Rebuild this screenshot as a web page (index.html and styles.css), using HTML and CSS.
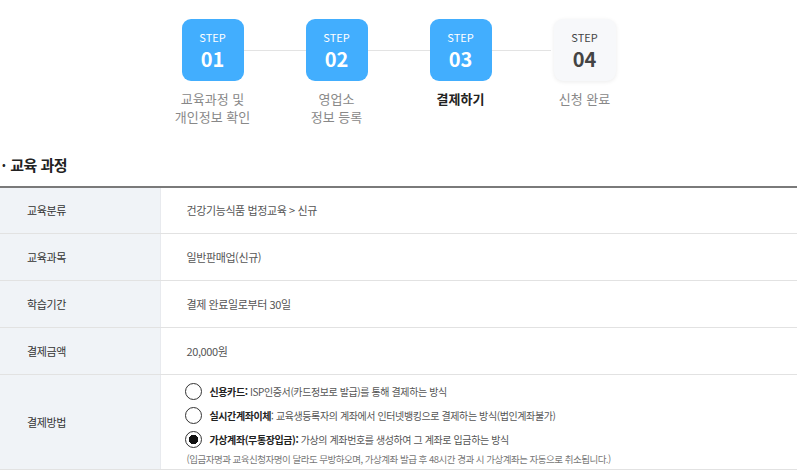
FILE: index.html
```html
<!DOCTYPE html>
<html lang="ko">
  <head>
    <meta charset="UTF-8" />
    <title>교육 신청 - 결제하기</title>
    <link rel="stylesheet" href="styles.css">
  </head>
  <body>
    <ol class="steps">
      <li class="step done">
        <div class="step-box"><span class="step-tag">STEP</span><span class="step-num">01</span></div>
        <p class="step-label">교육과정 및<br />개인정보 확인</p>
      </li>
      <li class="step done">
        <div class="step-box"><span class="step-tag">STEP</span><span class="step-num">02</span></div>
        <p class="step-label">영업소<br />정보 등록</p>
      </li>
      <li class="step current">
        <div class="step-box"><span class="step-tag">STEP</span><span class="step-num">03</span></div>
        <p class="step-label">결제하기</p>
      </li>
      <li class="step">
        <div class="step-box"><span class="step-tag">STEP</span><span class="step-num">04</span></div>
        <p class="step-label">신청 완료</p>
      </li>
    </ol>

    <h2 class="section-title">교육 과정</h2>
    <table class="info-table">
      <tr>
        <th>교육분류</th>
        <td>건강기능식품 법정교육 &gt; 신규</td>
      </tr>
      <tr>
        <th>교육과목</th>
        <td>일반판매업(신규)</td>
      </tr>
      <tr>
        <th>학습기간</th>
        <td>결제 완료일로부터 30일</td>
      </tr>
      <tr>
        <th>결제금액</th>
        <td>20,000원</td>
      </tr>
      <tr>
        <th>결제방법</th>
        <td class="pay-cell">
          <label class="pay-option">
            <input type="radio" name="payMethod" value="card" />
            <span><b>신용카드:</b> ISP인증서(카드정보로 발급)를 통해 결제하는 방식</span>
          </label>
          <label class="pay-option">
            <input type="radio" name="payMethod" value="bank" />
            <span><b>실시간계좌이체</b>: 교육생등록자의 계좌에서 인터넷뱅킹으로 결제하는 방식(법인계좌불가)</span>
          </label>
          <label class="pay-option">
            <input type="radio" name="payMethod" value="vbank" checked />
            <span><b>가상계좌(무통장입금):</b> 가상의 계좌번호를 생성하여 그 계좌로 입금하는 방식</span>
          </label>
          <p class="pay-note">(입금자명과 교육신청자명이 달라도 무방하오며, 가상계좌 발급 후 48시간 경과 시 가상계좌는 자동으로 취소됩니다.)</p>
        </td>
      </tr>
    </table>
  </body>
</html>
```

FILE: styles.css
```css
* {
  box-sizing: border-box;
}
body {
  margin: 0;
  font-family: "Noto Sans CJK KR", "Noto Sans", sans-serif;
  color: #333;
  background: #fff;
}

/* steps */
.steps {
  position: relative;
  display: flex;
  justify-content: center;
  list-style: none;
  margin: 0 0 0 -3px;
  padding: 19px 0 0;
}
.steps::before {
  content: "";
  position: absolute;
  top: 50px;
  left: 244px;
  width: 310px;
  height: 1px;
  background: #e3e3e3;
}
.step {
  width: 124px;
  display: flex;
  flex-direction: column;
  align-items: center;
  position: relative;
}
.step-box {
  width: 62px;
  height: 62px;
  border-radius: 9px;
  display: flex;
  flex-direction: column;
  align-items: center;
  padding-top: 11px;
  background: #f7f8fa;
  box-shadow: 0 1px 4px rgba(0, 0, 0, 0.08);
  color: #444;
}
.step.done .step-box,
.step.current .step-box {
  background: #42aefe;
  box-shadow: none;
  color: #fff;
}
.step-tag {
  font-size: 11px;
  line-height: 14px;
}
.step-num {
  margin-top: 3px;
  font-size: 20px;
  font-weight: 700;
  line-height: 24px;
}
.step-label {
  margin: 9px 0 0;
  font-size: 13px;
  line-height: 18px;
  text-align: center;
  color: #888;
}
.step.current .step-label {
  color: #222;
  font-weight: 700;
}

/* section */
.section-title {
  margin: 28px 0 0;
  padding-left: 2px;
  font-size: 15px;
  line-height: 20px;
  font-weight: 700;
  letter-spacing: -0.5px;
  color: #222;
}
.section-title::before {
  content: "•";
  font-weight: 400;
  font-size: 11px;
  margin-right: 5px;
  vertical-align: 2px;
}
.info-table {
  width: 797px;
  margin-top: 11px;
  border-collapse: collapse;
  border-top: 2px solid #7a7a7a;
  font-size: 11px;
  letter-spacing: -0.4px;
}
.info-table th,
.info-table td {
  height: 47px;
  border-bottom: 1px solid #e2e2e2;
  text-align: left;
  vertical-align: middle;
}
.info-table tr:first-child th,
.info-table tr:first-child td {
  height: 46px;
}
.info-table th {
  width: 160px;
  padding-left: 27px;
  background: #f0f3f7;
  font-weight: 400;
  color: #333;
  border-right: 1px solid #e8eaee;
}
.info-table td {
  padding-left: 26px;
  color: #555;
}
.info-table td.pay-cell {
  height: 95px;
  padding: 4px 0 2px 24px;
}
.pay-option {
  display: flex;
  align-items: center;
  height: 24px;
  font-size: 10px;
  color: #555;
}
.pay-option b {
  color: #222;
}
.pay-option input {
  appearance: none;
  margin: 0 8px 0 0;
  width: 17px;
  height: 17px;
  border: 1px solid #333;
  border-radius: 50%;
  background: #fff;
  flex-shrink: 0;
}
.pay-option input:checked {
  background: radial-gradient(circle, #111 0 4.5px, #fff 5px);
}
.pay-note {
  margin: 0 0 0 2px;
  font-size: 9.5px;
  line-height: 14px;
  color: #777;
  letter-spacing: -0.5px;
}
```
